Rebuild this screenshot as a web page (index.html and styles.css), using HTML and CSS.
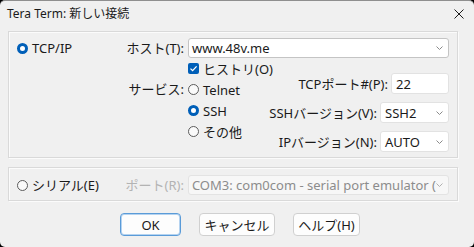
FILE: index.html
```html
<!DOCTYPE html>
<html lang="ja">
<head>
<meta charset="utf-8">
<title>Tera Term: 新しい接続</title>
<link rel="stylesheet" href="styles.css">
</head>
<body>
<div class="window">
  <header class="titlebar">
    <span class="title">Tera Term: 新しい接続</span>
    <svg class="close" width="10" height="10" viewBox="0 0 10 10"><path d="M0.5 0.5L9.5 9.5M9.5 0.5L0.5 9.5" stroke="#1c1c1c" stroke-width="1" fill="none"/></svg>
  </header>
  <main class="content">
    <section class="group group-tcp">
      <div class="sel"><span class="radio on"></span><span>TCP/IP</span></div>
      <div class="form">
        <div class="row">
          <span class="lbl">ホスト(T):</span>
          <div class="combo"><span>www.48v.me</span><svg class="chev" width="7" height="4" viewBox="0 0 7 4"><path d="M0.5 0.5L3.5 3.5L6.5 0.5" stroke="#8a8a8a" fill="none"/></svg></div>
        </div>
        <div class="service">
          <span class="lbl svc-lbl">サービス:</span>
          <ul class="opts">
            <li><span class="check"><svg width="11" height="11" viewBox="0 0 11 11"><path d="M2.5 5.6L4.6 7.6L8.6 3.4" stroke="#fff" stroke-width="1.3" fill="none"/></svg></span><span>ヒストリ(O)</span></li>
            <li><span class="radio"></span><span>Telnet</span></li>
            <li><span class="radio on"></span><span>SSH</span></li>
            <li><span class="radio"></span><span>その他</span></li>
          </ul>
          <div class="settings">
            <div class="setting"><span>TCPポート#(P):</span><div class="field port">22</div></div>
            <div class="setting"><span>SSHバージョン(V):</span><div class="field select"><span>SSH2</span><svg class="chev" width="7" height="4" viewBox="0 0 7 4"><path d="M0.5 0.5L3.5 3.5L6.5 0.5" stroke="#8a8a8a" fill="none"/></svg></div></div>
            <div class="setting"><span>IPバージョン(N):</span><div class="field select"><span>AUTO</span><svg class="chev" width="7" height="4" viewBox="0 0 7 4"><path d="M0.5 0.5L3.5 3.5L6.5 0.5" stroke="#8a8a8a" fill="none"/></svg></div></div>
          </div>
        </div>
      </div>
    </section>
    <section class="group group-serial">
      <div class="sel"><span class="radio"></span><span>シリアル(E)</span></div>
      <div class="form">
        <div class="row">
          <span class="lbl disabled">ポート(R):</span>
          <div class="combo combo-disabled"><span>COM3: com0com - serial port emulator (</span><svg class="chev" width="7" height="4" viewBox="0 0 7 4"><path d="M0.5 0.5L3.5 3.5L6.5 0.5" stroke="#b0b0b0" fill="none"/></svg></div>
        </div>
      </div>
    </section>
    <div class="buttons">
      <button class="btn btn-ok">OK</button>
      <button class="btn btn-cancel">キャンセル</button>
      <button class="btn btn-help">ヘルプ(H)</button>
    </div>
  </main>
</div>
</body>
</html>
```

FILE: styles.css
```css
* { box-sizing: border-box; margin: 0; padding: 0; }
html, body { width: 474px; height: 247px; overflow: hidden; background: #000; }
body {
  font-family: "Noto Sans", "Noto Sans CJK JP", sans-serif;
  font-size: 13px;
  line-height: 16px;
  color: #1a1a1a;
}
.window {
  width: 474px;
  height: 247px;
  background: #f0f0f0;
  border-top: 1px solid #8f8f8f;
  border-radius: 5px;
  overflow: hidden;
  display: flex;
  flex-direction: column;
}
.titlebar {
  height: 25px;
  display: flex;
  align-items: center;
  justify-content: space-between;
  padding: 0 10px 0 7px;
  font-size: 12px;
}
.content {
  padding: 5px 16px 0 8px;
  display: flex;
  flex-direction: column;
}
.group {
  border: 1px solid #d9d9d9;
  box-shadow: inset 1px 1px 0 #fbfbfb, 1px 1px 0 #fbfbfb;
  display: flex;
  align-items: flex-start;
  padding: 6px 8px 5px 8px;
}
.group-serial { margin-top: 9px; padding-top: 7px; padding-bottom: 5px; }
.sel {
  width: 103px;
  height: 20px;
  display: flex;
  align-items: center;
  gap: 4px;
}
.form { flex: 1; display: flex; flex-direction: column; }
.row { display: flex; align-items: center; height: 20px; }
.lbl {
  width: 68px;
  padding-right: 4px;
  text-align: right;
  white-space: nowrap;
}
.disabled { color: #b3b3b3; }
.combo {
  flex: 1;
  height: 20px;
  background: #fff;
  border: 1px solid #c4c4c4;
  border-radius: 3px;
  display: flex;
  align-items: center;
  justify-content: space-between;
  padding: 0 5px 0 3px;
  white-space: nowrap;
  overflow: hidden;
}
.combo-disabled {
  background: #f7f7f7;
  border-color: #e3e3e3;
  color: #8c8c8c;
}
.service { display: flex; }
.svc-lbl {
  margin-top: 21px;
  height: 21px;
  line-height: 21px;
}
.opts { list-style: none; width: 80px; }
.opts li {
  height: 21px;
  display: flex;
  align-items: center;
  gap: 4px;
  white-space: nowrap;
}
.radio {
  flex: none;
  width: 11px;
  height: 11px;
  border-radius: 50%;
  border: 1px solid #5c5c5c;
  background: #fafafa;
}
.radio.on { border: 3px solid #005fb8; background: #fff; }
.check {
  flex: none;
  width: 11px;
  height: 11px;
  border-radius: 2px;
  background: #005fb8;
  display: flex;
}
.settings {
  flex: 1;
  display: flex;
  flex-direction: column;
  gap: 8px;
  margin-top: 15px;
}
.setting {
  display: flex;
  align-items: center;
  justify-content: flex-end;
  gap: 3px;
  height: 21px;
  white-space: nowrap;
}
.field {
  height: 21px;
  background: #fff;
  border: 1px solid #e2e2e2;
  border-radius: 3px;
  display: flex;
  align-items: center;
  padding: 0 5px 0 4px;
}
.port { width: 58px; }
.select { width: 69px; justify-content: space-between; }
.chev { flex: none; }
.buttons {
  display: flex;
  gap: 18px;
  margin-top: 12px;
  padding-left: 112px;
}
.btn {
  height: 23px;
  font: inherit;
  color: #1a1a1a;
  background: #fdfdfd;
  border: 1px solid #d0d0d0;
  border-radius: 4px;
  display: flex;
  align-items: center;
  justify-content: center;
}
.btn-ok {
  width: 61px;
  border-color: #5a9bd8;
  box-shadow: inset 0 0 0 1px #b5d3f0;
}
.btn-cancel { width: 76px; }
.btn-help { width: 67px; }
```
